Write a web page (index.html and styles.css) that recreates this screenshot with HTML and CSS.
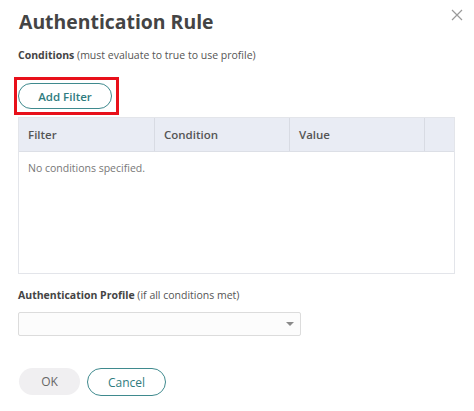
FILE: index.html
```html
<!DOCTYPE html>
<html>
<head>
<meta charset="utf-8">
<link rel="stylesheet" href="styles.css">
</head>
<body>
<div class="dialog">
  <div class="header">
    <h1 class="title">Authentication Rule</h1>
    <svg class="close" width="12" height="12" viewBox="0 0 12 12"><path d="M1 1L11 11M11 1L1 11" stroke="#9a9a9a" stroke-width="1.2" fill="none"/></svg>
  </div>
  <div class="label"><b>Conditions</b> (must evaluate to true to use profile)</div>
  <div class="highlight">
    <button class="btn outline add">Add Filter</button>
  </div>
  <div class="table">
    <div class="thead">
      <div class="th">Filter</div>
      <div class="th">Condition</div>
      <div class="th">Value</div>
      <div class="th last"></div>
    </div>
    <div class="tbody">No conditions specified.</div>
  </div>
  <div class="label profile"><b>Authentication Profile</b> (if all conditions met)</div>
  <div class="select"><span class="arrow"></span></div>
  <div class="actions">
    <button class="btn ok">OK</button>
    <button class="btn outline cancel">Cancel</button>
  </div>
</div>
</body>
</html>
```
FILE: styles.css
```css
html, body {
  margin: 0;
  padding: 0;
  background: #ffffff;
}
.dialog {
  width: 474px;
  height: 411px;
  box-sizing: border-box;
  padding: 8px 19px 0 18px;
  font-family: "Open Sans", sans-serif;
  color: #444;
}
.header {
  display: flex;
  justify-content: space-between;
  align-items: flex-start;
  height: 28px;
}
.title {
  margin: 0 0 0 1px;
  font-size: 19.4px;
  font-weight: 700;
  color: #444;
  line-height: 28px;
}
.close {
  margin-top: 1px;
  margin-right: -8px;
}
.label {
  margin-top: 11px;
  font-size: 10.5px;
  line-height: 16px;
  color: #555;
}
.label b {
  font-weight: 700;
  color: #444;
}
.highlight {
  margin: 14px 0 0 -4px;
  width: 105px;
  height: 38px;
  box-sizing: border-box;
  border: 3px solid #e8101a;
  padding: 3px 0 0 1px;
}
.btn {
  font-family: "Open Sans", sans-serif;
  font-size: 12px;
  font-weight: 600;
  border-radius: 14px;
  height: 27px;
  box-sizing: border-box;
  cursor: pointer;
  padding: 0;
}
.outline {
  background: #fff;
  border: 1px solid #3f8a8e;
  color: #2f7c80;
}
.add {
  width: 94px;
  height: 26px;
  border-radius: 13px;
  font-size: 11.5px;
  padding-top: 1px;
}
.table {
  margin-top: 2px;
  width: 437px;
  height: 157px;
  box-sizing: border-box;
  border: 1px solid #e3e5ea;
  display: flex;
  flex-direction: column;
}
.thead {
  display: grid;
  grid-template-columns: 136px 135px 135px 1fr;
  background: #e9ecf4;
  height: 33px;
  border-bottom: 1px solid #dcdfe6;
}
.th {
  font-size: 11.5px;
  font-weight: 600;
  color: #555;
  line-height: 33px;
  padding-left: 9px;
  border-right: 1px solid #d8dbe3;
}
.th.last {
  border-right: none;
}
.tbody {
  padding: 8px 0 0 9px;
  font-size: 10.5px;
  color: #777;
  line-height: 16px;
}
.profile {
  margin-top: 13px;
}
.select {
  margin-top: 9px;
  width: 283px;
  height: 24px;
  box-sizing: border-box;
  border: 1px solid #dcdcdc;
  border-radius: 2px;
  background: #fcfcfc;
  display: flex;
  justify-content: flex-end;
  align-items: center;
  padding-right: 6px;
}
.arrow {
  width: 0;
  height: 0;
  border-left: 4px solid transparent;
  border-right: 4px solid transparent;
  border-top: 4px solid #8a8a8a;
}
.actions {
  margin-top: 32px;
  display: flex;
  gap: 7px;
  padding-left: 1px;
}
.ok {
  width: 61px;
  background: #f0eff1;
  border: none;
  color: #666;
  font-weight: 400;
}
.cancel {
  width: 79px;
  height: 28px;
  font-weight: 400;
}
```
